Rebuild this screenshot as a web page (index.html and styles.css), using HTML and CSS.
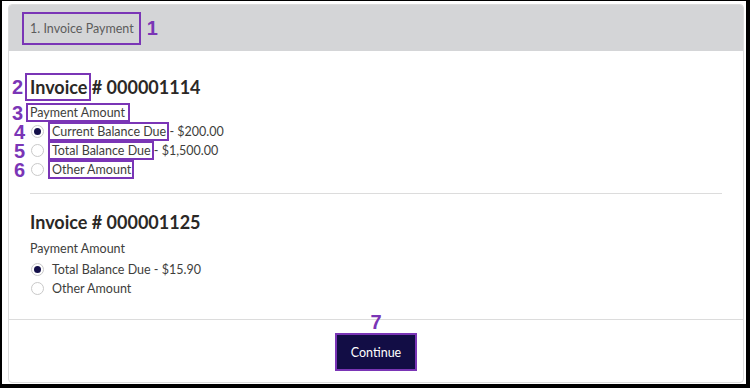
FILE: index.html
```html
<!DOCTYPE html>
<html lang="en">
<head>
  <meta charset="UTF-8">
  <title>Invoice Payment</title>
  <link rel="stylesheet" href="styles.css">
</head>
<body>

<div class="frame">
  <div class="card">
    <div class="step-bar">
      <span class="mark mark-step">1. Invoice Payment<b class="num num-right">1</b></span>
    </div>

    <div class="card-body">
      <div class="invoice">
        <h2 class="invoice-title"><span class="mark mark-title">Invoice<b class="num">2</b></span> # 000001114</h2>
        <div class="field-label"><span class="mark mark-label">Payment Amount<b class="num">3</b></span></div>
        <div class="option">
          <span class="radio checked"></span><span class="mark mark-opt">Current Balance Due<b class="num num-far">4</b></span> - $200.00
        </div>
        <div class="option">
          <span class="radio"></span><span class="mark mark-opt">Total Balance Due<b class="num num-far">5</b></span> - $1,500.00
        </div>
        <div class="option">
          <span class="radio"></span><span class="mark mark-opt">Other Amount<b class="num num-far">6</b></span>
        </div>
      </div>

      <hr class="divider">

      <div class="invoice">
        <h2 class="invoice-title">Invoice # 000001125</h2>
        <div class="field-label">Payment Amount</div>
        <div class="option">
          <span class="radio checked"></span>Total Balance Due - $15.90
        </div>
        <div class="option">
          <span class="radio"></span>Other Amount
        </div>
      </div>
    </div>

    <div class="card-footer">
      <button class="btn-continue">Continue<b class="num num-top">7</b></button>
    </div>
  </div>
</div>

</body>
</html>
```

FILE: styles.css
```css
* { box-sizing:border-box; }
body { margin:0; background:#000; font-family:'Lato','Open Sans',sans-serif; color:#3e3e3c; }
.frame { margin:1px 4px 4px 2px; height:383px; background:#fff; padding:3px 2px 1px 6px; }
.card { height:379px; border:1px solid #dcdcdc; border-radius:4px; display:flex; flex-direction:column; }

.step-bar { height:46px; background:#d4d5d7; border-radius:3px 3px 0 0; padding:0 0 0 21px; display:flex; align-items:center; font-size:12.5px; color:#5c5c5c; }

.card-body { padding:0 21px; height:268px; }
.invoice-title { margin:23px 0 0; font-size:18px; line-height:26px; font-weight:700; color:#2b2826; }
.invoice + .divider + .invoice .invoice-title { margin-top:15px; }
.invoice + .divider + .invoice .field-label { margin-top:4px; margin-bottom:2px; }
.field-label { margin-top:3px; font-size:12.5px; line-height:19px; color:#3e3e3c; }
.option { height:19px; line-height:19px; font-size:12.5px; color:#3e3e3c; white-space:nowrap; }
.radio { display:inline-block; vertical-align:-2px; width:13px; height:13px; border:1px solid #c9c9c9; border-radius:50%; background:#fff; margin:0 8px 0 1px; position:relative; }
.radio.checked::after { content:""; position:absolute; left:2px; top:2px; width:7px; height:7px; border-radius:50%; background:#14104a; }
.divider { margin:14px 0 0; border:none; border-top:1px solid #dcdcdc; }

.card-footer { flex:1; border-top:1px solid #dcdcdc; display:flex; justify-content:center; align-items:flex-start; padding-top:13px; }
.btn-continue { position:relative; width:82px; height:38px; background:#120d45; color:#fff; border:2px solid #7a35b6; font-family:inherit; font-size:12.5px; cursor:pointer; }

/* annotation boxes and numbers */
.mark { position:relative; display:inline-block; }
.mark::before { content:""; position:absolute; border:2px solid #7a35b6; }
.mark-step::before { top:-9px; bottom:-9px; left:-8px; right:-7px; }
.mark-title::before { top:-1px; bottom:-1px; left:-5px; right:-4px; }
.mark-label::before { top:0; bottom:0; left:-4px; right:-5px; }
.mark-opt::before { top:0; bottom:0; left:-4px; right:-3px; }
.num { position:absolute; right:calc(100% + 7px); top:50%; transform:translateY(-50%); font-family:'Liberation Sans',Arial,sans-serif; font-size:20px; line-height:18px; font-weight:700; color:#7a35b6; }
.num-far { right:calc(100% + 27px); }
.num-right { right:auto; left:calc(100% + 13px); }
.num-top { right:auto; left:50%; top:auto; bottom:100%; transform:translateX(-50%); margin-bottom:4px; }
```
